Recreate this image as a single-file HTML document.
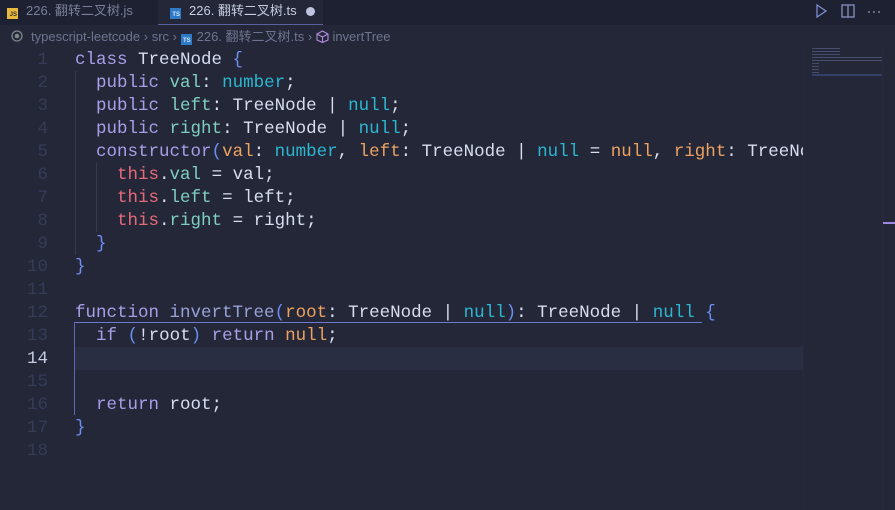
<!DOCTYPE html>
<html><head><meta charset="utf-8"><style>
*{margin:0;padding:0;box-sizing:border-box}
body{width:895px;height:510px;background:#232738;overflow:hidden;font-family:"Liberation Sans","Noto Sans CJK SC",sans-serif;position:relative}
.tabs{position:absolute;left:0;top:0;width:895px;height:25px;background:#1e2131}
.tab{position:absolute;top:0;height:25px;font-size:13px;line-height:22px;color:#7a8099}
.t1{left:0;width:158px;padding-left:7px}
.t2{left:158px;width:165px;background:#232738;color:#c7cde0;padding-left:12px;border-bottom:1px solid #5b5f9e}
.ic{display:inline-block;width:11px;height:11px;font:bold 6px "Liberation Sans";vertical-align:-1px;margin-right:8px;text-align:right;line-height:14px;padding-right:1px}
.js{background:#e8b93c;color:#333}
.ts{background:#2f7ac7;color:#cfe3f7}
.dot{position:absolute;left:148px;top:7px;width:9px;height:9px;border-radius:50%;background:#c0c4e0}
.bc{position:absolute;top:25px;left:0;height:24px;width:895px;font-size:13px;line-height:24px;color:#6f7590;padding-left:11px;white-space:nowrap}
.code{position:absolute;top:49px;left:0;font-family:"Liberation Mono",monospace;font-size:17.5px;line-height:23px;white-space:pre;color:#d8def0}
.ln{position:absolute;left:0;width:48px;text-align:right;color:#363c58}
.cl{position:absolute;left:75px}
.k{color:#a99ee8}.p{color:#7fcfc0}.ty{color:#2bb7d0}.n{color:#2bb7d0}.th{color:#e66a7a}.pa{color:#eda25f}.b{color:#6c8ef0}.f{color:#98a2d8}.o{color:#eda25f}
</style></head><body>
<div class="tabs">
<div class="tab t1"><span class="ic js">JS</span>226. 翻转二叉树.js</div>
<div class="tab t2"><span class="ic ts">TS</span>226. 翻转二叉树.ts<span class="dot"></span></div>
<svg style="position:absolute;left:814px;top:3px" width="80" height="16"><path d="M3 2 L12 8 L3 14 Z" fill="none" stroke="#7b8ccf" stroke-width="1.3"/><rect x="28" y="2" width="12" height="12" fill="none" stroke="#8a90c0" stroke-width="1.3"/><line x1="34" y1="2" x2="34" y2="14" stroke="#8a90c0" stroke-width="1.3"/><circle cx="55" cy="9" r="1" fill="#7a8099"/><circle cx="60" cy="9" r="1" fill="#7a8099"/><circle cx="65" cy="9" r="1" fill="#7a8099"/></svg>
</div>
<div class="bc"><svg width="12" height="12" style="vertical-align:-1px;margin-right:8px"><circle cx="6" cy="6" r="5" fill="none" stroke="#7a8a88" stroke-width="1.3"/><circle cx="6" cy="6" r="2.3" fill="#7a8a88"/></svg>typescript-leetcode <span>›</span> src <span>›</span> <span class="ic ts" style="margin-right:5px">TS</span>226. 翻转二叉树.ts <span>›</span> <svg width="13" height="13" style="vertical-align:-2px"><path d="M6.5 1 L12 4 L12 10 L6.5 12.5 L1 10 L1 4 Z M1 4 L6.5 7 L12 4 M6.5 7 L6.5 12.5" fill="none" stroke="#b58be0" stroke-width="1.1"/></svg> invertTree</div>
<div style="position:absolute;left:75px;top:347px;width:728px;height:23px;background:#2a2e42"></div>
<div style="position:absolute;left:75px;top:322px;width:627px;height:1px;background:#6c7ad0"></div>
<div style="position:absolute;left:74px;top:322px;width:1px;height:93px;background:#5a68b8"></div>
<div style="position:absolute;left:75px;top:71px;width:1px;height:184px;background:#353a52"></div>
<div style="position:absolute;left:96px;top:163px;width:1px;height:69px;background:#353a52"></div>
<div style="position:absolute;left:803px;top:48px;width:1px;height:462px;background:#262a3c"></div>
<div style="position:absolute;left:882px;top:48px;width:1px;height:462px;background:#262a3c"></div>
<div style="position:absolute;left:883px;top:222px;width:12px;height:2px;background:#9d8ae0"></div>
<div style="position:absolute;left:812px;top:48px;width:70px;height:30px;opacity:.5;background:repeating-linear-gradient(#6a7aa0 0 1px,transparent 1px 3px);clip-path:polygon(0 0,40% 0,40% 30%,100% 30%,100% 50%,10% 50%,10% 100%,0 100%)"></div>
<div style="position:absolute;left:812px;top:74px;width:70px;height:2px;background:#34406a"></div>
<div class="code">
<div class="ln" style="top:0">1</div><div class="ln" style="top:23px">2</div><div class="ln" style="top:46px">3</div><div class="ln" style="top:69px">4</div><div class="ln" style="top:92px">5</div><div class="ln" style="top:115px">6</div><div class="ln" style="top:138px">7</div><div class="ln" style="top:161px">8</div><div class="ln" style="top:184px">9</div><div class="ln" style="top:207px">10</div><div class="ln" style="top:230px">11</div><div class="ln" style="top:253px">12</div><div class="ln" style="top:276px">13</div><div class="ln" style="top:299px;color:#c5cbe0">14</div><div class="ln" style="top:322px">15</div><div class="ln" style="top:345px">16</div><div class="ln" style="top:368px">17</div><div class="ln" style="top:391px">18</div>
<div class="cl" style="top:0"><span class="k">class</span> TreeNode <span class="b">{</span></div>
<div class="cl" style="top:23px">  <span class="k">public</span> <span class="p">val</span>: <span class="ty">number</span>;</div>
<div class="cl" style="top:46px">  <span class="k">public</span> <span class="p">left</span>: TreeNode | <span class="n">null</span>;</div>
<div class="cl" style="top:69px">  <span class="k">public</span> <span class="p">right</span>: TreeNode | <span class="n">null</span>;</div>
<div class="cl" style="top:92px;width:728px;overflow:hidden">  <span class="k">constructor</span><span class="b">(</span><span class="pa">val</span>: <span class="ty">number</span>, <span class="pa">left</span>: TreeNode | <span class="n">null</span> = <span class="o">null</span>, <span class="pa">right</span>: TreeNode | null</div>
<div class="cl" style="top:115px">    <span class="th">this</span>.<span class="p">val</span> = val;</div>
<div class="cl" style="top:138px">    <span class="th">this</span>.<span class="p">left</span> = left;</div>
<div class="cl" style="top:161px">    <span class="th">this</span>.<span class="p">right</span> = right;</div>
<div class="cl" style="top:184px">  <span class="b">}</span></div>
<div class="cl" style="top:207px"><span class="b">}</span></div>
<div class="cl" style="top:253px"><span class="k">function</span> <span class="f">invertTree</span><span class="b">(</span><span class="pa">root</span>: TreeNode | <span class="n">null</span><span class="b">)</span>: TreeNode | <span class="n">null</span> <span class="b">{</span></div>
<div class="cl" style="top:276px">  <span class="k">if</span> <span class="b">(</span>!root<span class="b">)</span> <span class="k">return</span> <span class="o">null</span>;</div>
<div class="cl" style="top:345px">  <span class="k">return</span> root;</div>
<div class="cl" style="top:368px"><span class="b">}</span></div>
</div>
</body></html>
